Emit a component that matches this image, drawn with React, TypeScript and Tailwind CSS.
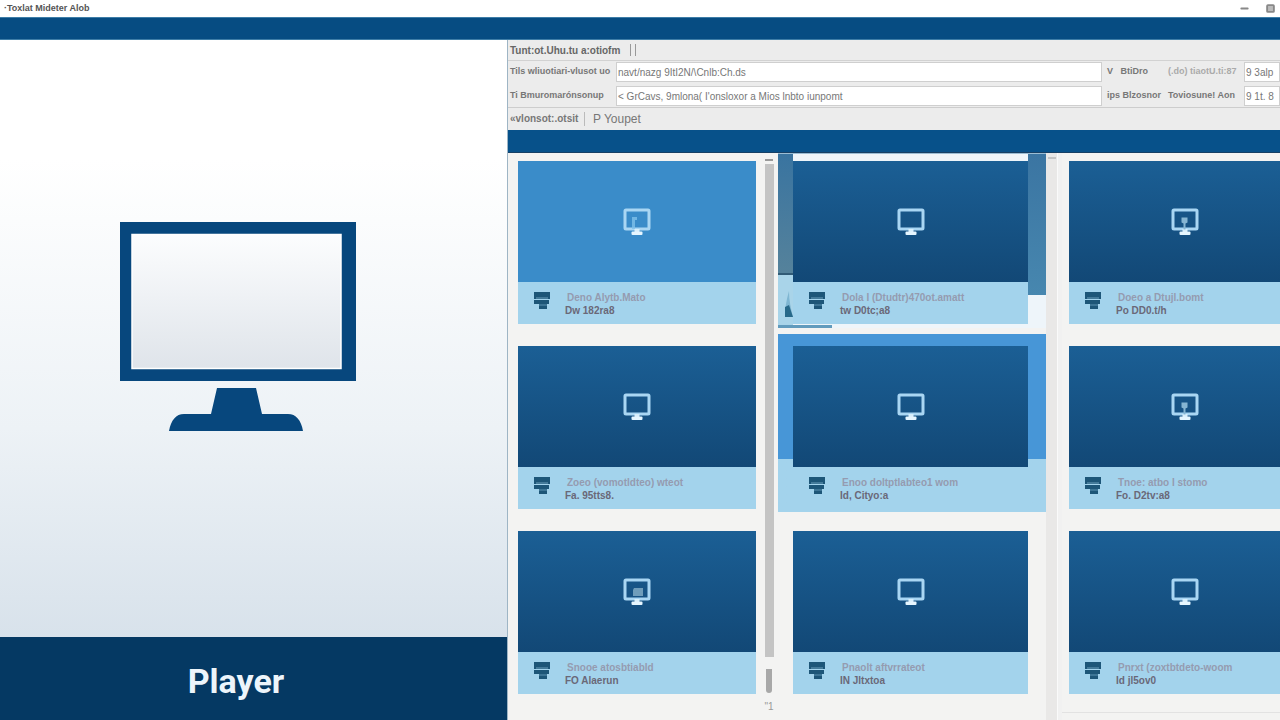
import { Minus, Square } from "lucide-react"
import clsx from "clsx"

type Inner = "none" | "file" | "pin" | "box"

interface Screen {
  title: string
  status: string
  inner: Inner
  active?: boolean
}

const first: Screen[] = [
  { title: "Deno Alytb.Mato", status: "Dw 182ra8", inner: "file", active: true },
  { title: "Zoeo (vomotldteo) wteot", status: "Fa. 95tts8.", inner: "none" },
  { title: "Snooe atosbtiabld", status: "FO Alaerun", inner: "box" },
]

const second: Screen[] = [
  { title: "Dola I (Dtudtr)470ot.amatt", status: "tw D0tc;a8", inner: "none" },
  { title: "Enoo doltptlabteo1 wom", status: "Id, Cityo:a", inner: "none" },
  { title: "Pnaolt aftvrrateot", status: "IN Jltxtoa", inner: "none" },
]

const third: Screen[] = [
  { title: "Doeo a Dtujl.bomt", status: "Po DD0.t/h", inner: "pin" },
  { title: "Tnoe: atbo I stomo", status: "Fo. D2tv:a8", inner: "pin" },
  { title: "Pnrxt (zoxtbtdeto-woom", status: "Id jl5ov0", inner: "none" },
]

function ScreenIcon({ inner }: { inner: Inner }) {
  return (
    <svg viewBox="0 0 28 28" className="size-7" fill="none" aria-hidden="true">
      <rect x="2" y="2" width="24" height="19" rx="1" stroke="#a9d6f3" strokeWidth="3" />
      <path d="M14 21v3" stroke="#d8effc" strokeWidth="5" />
      <rect x="8.5" y="23.5" width="11" height="3.500" rx="1" fill="#e6f6ff" />
      {inner === "file" && <path d="M9 9h5v3h-2v9H9z" fill="#7fc0ea" opacity="0.8" />}
      {inner === "pin" && <path d="M10.5 9.5h6v5l-2 1v6h-2v-6l-2-1z" fill="#86b5d2" />}
      {inner === "box" && <path d="M11 10h9v8H10v-6z" fill="#6f9dbb" />}
    </svg>
  )
}

function DeviceIcon() {
  return (
    <svg viewBox="0 0 16 18" className="h-[18px] w-4 shrink-0" aria-hidden="true">
      <path d="M0 0h16v7H0zM0 8h15v4H0z" fill="#1d5678" />
      <path d="M2 6h12" stroke="#6d9fbb" />
      <path d="M5 12h8v5H5z" fill="#1d5678" />
      <path d="M5 13h8" stroke="#5f94b3" />
    </svg>
  )
}

function ScreenCard({ screen }: { screen: Screen }) {
  return (
    <button type="button" className="flex h-[163px] w-full flex-col text-left">
      <span
        className={clsx(
          "flex w-full flex-1 items-center justify-center",
          screen.active ? "bg-[#3a8cc9]" : "bg-linear-to-b from-[#1b5f95] to-[#124876]"
        )}
      >
        <ScreenIcon inner={screen.inner} />
      </span>
      <span className="flex h-[42px] w-full gap-[15px] bg-[#a3d3ec] pt-[10px] pl-4">
        <DeviceIcon />
        <span className="whitespace-nowrap">
          <span className="block pl-[2px] text-[10px] leading-[12px] font-bold text-[#959bb0]">{screen.title}</span>
          <span className="block text-[10px] leading-[14px] font-bold text-[#6a6878]">{screen.status}</span>
        </span>
      </span>
    </button>
  )
}

function Monitor() {
  return (
    <svg viewBox="0 0 236 210" className="w-[236px]" aria-hidden="true">
      <defs>
        <linearGradient id="glass" x1="0" y1="0" x2="0" y2="1">
          <stop offset="0" stopColor="#fcfdfe" />
          <stop offset="1" stopColor="#dfe4ea" />
        </linearGradient>
      </defs>
      <path d="M0 0h236v159H0z" fill="#07477d" />
      <path d="M12 12.500h209v134H12z" fill="url(#glass)" stroke="#fff" strokeWidth="1.500" />
      <path d="M97 166h39l6 26h26c8 0 13 6 15 17H49c2-11 7-17 15-17h27z" fill="#07477d" />
    </svg>
  )
}

const labelClass = "text-[9px] font-bold whitespace-nowrap text-[#777]"
const inputClass = "h-5 w-full min-w-0 border border-[#cfcfcf] bg-white px-px text-[10px] text-[#777] outline-none"

function Toolbar() {
  return (
    <div className="bg-[#ececec]">
      <div className="flex h-[21px] items-center border-b border-[#d2d2d2] text-[10px] text-[#666]">
        <button type="button" className="w-[122px] pl-[2px] text-left font-bold whitespace-nowrap">
          Tunt:ot.Uhu.tu a:otiofm
        </button>
        <span className="h-3 w-[6px] border-x border-[#999]" />
      </div>
      <form className="grid grid-cols-[108px_1fr_66px_76px_36px] items-center gap-y-1 border-b border-[#cdcdcd] py-[1px]">
        <label htmlFor="source" className={clsx(labelClass, "pl-[2px]")}>Tils wliuotiari-vlusot uo</label>
        <input id="source" className={inputClass} defaultValue="navt/nazg 9ItI2N/\Cnlb:Ch.ds" />
        <label htmlFor="scale" className={clsx(labelClass, "pl-[5px]")}>V&nbsp; &nbsp;BtiDro</label>
        <label htmlFor="scale" className="text-[9px] font-bold whitespace-nowrap text-[#aaa]">(.do) tiaotU.ti:87</label>
        <input id="scale" className={inputClass} defaultValue="9 3alp" />

        <label htmlFor="target" className={clsx(labelClass, "pl-[2px]")}>Ti Bmuromarónsonup</label>
        <input id="target" className={inputClass} defaultValue="< GrCavs, 9mlona( I'onsloxor a Mios lnbto iunpomt" />
        <label htmlFor="rate" className={clsx(labelClass, "pl-[5px]")}>ips Blzosnor</label>
        <label htmlFor="rate" className={labelClass}>Toviosune! Aon</label>
        <input id="rate" className={inputClass} defaultValue="9 1t. 8" />
      </form>
      <div className="flex h-[22px] items-center text-[#777]">
        <button type="button" className="w-[77px] border-r border-[#bbb] pl-[2px] text-left text-[10px] leading-[14px] font-bold whitespace-nowrap">
          «vlonsot:.otsit
        </button>
        <button type="button" className="pl-2 text-[12px]">P Youpet</button>
      </div>
    </div>
  )
}

function Scrollbar() {
  return (
    <div className="flex w-[10px] flex-col items-center pt-[6px] pb-2">
      <span className="h-[2px] w-2 bg-[#999]" />
      <span className="mt-[3px] w-[9px] flex-1 bg-[#c4c4c4]" />
      <span className="mt-3 h-6 w-[6px] rounded-b-sm bg-[#a8a8a8]" />
      <span className="mt-2 text-[10px] leading-[11px] text-[#999]">"1</span>
    </div>
  )
}

export default function App() {
  return (
    <div className="flex h-screen flex-col overflow-hidden bg-white font-['Liberation_Sans',Arial,sans-serif]">
      <header>
        <div className="flex h-[17px] items-center justify-between pl-1 text-[9px] font-bold text-[#555]">
          <h1>·Toxlat Mideter Alob</h1>
          <div className="flex gap-4 pr-[5px] text-[#888]">
            <button type="button" aria-label="Minimize">
              <Minus size={11} strokeWidth={4} />
            </button>
            <button type="button" aria-label="Maximize">
              <Square size={9} strokeWidth={5} fill="#bbb" />
            </button>
          </div>
        </div>
        <div className="h-[23px] border-y border-[#3d7da7] bg-[#064c82]" />
      </header>

      <main className="grid min-h-0 flex-1 grid-cols-[507fr_773fr]">
        <section className="flex min-w-0 flex-col">
          <div className="flex flex-1 flex-col items-center bg-linear-to-b from-white from-20% via-[#edf2f6] via-65% to-[#d8e2eb] pt-[182px] pr-[31px]">
            <Monitor />
          </div>
          <div className="flex h-[83px] items-center justify-center bg-[#053963] pt-1 pr-[35px]">
            <h2 className="font-['Roboto',sans-serif] text-[34px] leading-[36px] font-bold text-[#edf5fb]">Player</h2>
          </div>
        </section>

        <section className="flex min-w-0 flex-col overflow-hidden border-l border-[#9eb5c5]">
          <Toolbar />
          <div className="h-[23px] shrink-0 border-b border-[#174065] bg-[#07518a]" />

          <div className="grid min-h-0 flex-1 grid-cols-[270fr_268fr_12fr_222fr] bg-[#f3f3f2]">
            <div className="flex gap-2 pr-1 pl-[10px]">
              <div className="flex min-w-0 flex-1 flex-col gap-[22px] pt-2">
                {first.map((screen) => (
                  <ScreenCard key={screen.title} screen={screen} />
                ))}
              </div>
              <Scrollbar />
            </div>

            <div className="min-w-0">
              <div className="flex h-[175px] border-t border-[#9bbdd4] bg-[#eef5fa]">
                <div className="flex w-[15px] flex-col bg-[#a9d4e9]">
                  <div className="h-[121px] border-b-2 border-[#315b76] bg-linear-to-b from-[#3974a0] to-[#55829b]" />
                  <svg viewBox="0 0 15 50" className="h-[50px]" aria-hidden="true">
                    <path d="M11 16c0 10 2 18 4 26H7c0-8 1-16 4-26z" fill="#7fb6d2" />
                    <path d="M7 32l4-2 4 12H7z" fill="#286989" />
                  </svg>
                  <div className="h-[3px] w-[54px] bg-[#619bbd]" />
                </div>
                <div className="min-w-0 flex-1 pt-[7px]">
                  <ScreenCard screen={second[0]} />
                </div>
                <div className="h-[141px] w-[18px] bg-linear-to-b from-[#3b75a2] to-[#4787af]" />
              </div>
              <div className="mt-[6px] bg-linear-to-b from-[#4796d7] from-70% to-[#a3d3ec] to-70% pt-3 pr-[18px] pb-[3px] pl-[15px]">
                <ScreenCard screen={second[1]} />
              </div>
              <div className="mt-[19px] pr-[18px] pl-[15px]">
                <ScreenCard screen={second[2]} />
              </div>
            </div>

            <div className="border-r border-[#fafafa] bg-[#e9e8e7] pt-1">
              <span className="mx-auto block h-[2px] w-2 bg-[#c5c5c5]" />
            </div>

            <div className="min-w-0 border-l-4 border-[#f1f1f1]">
              <div className="flex w-[246px] flex-col gap-[22px] border-b border-[#e2e2e2] pt-2 pr-2 pb-[18px] pl-[7px]">
                {third.map((screen) => (
                  <ScreenCard key={screen.title} screen={screen} />
                ))}
              </div>
            </div>
          </div>
        </section>
      </main>
    </div>
  )
}
